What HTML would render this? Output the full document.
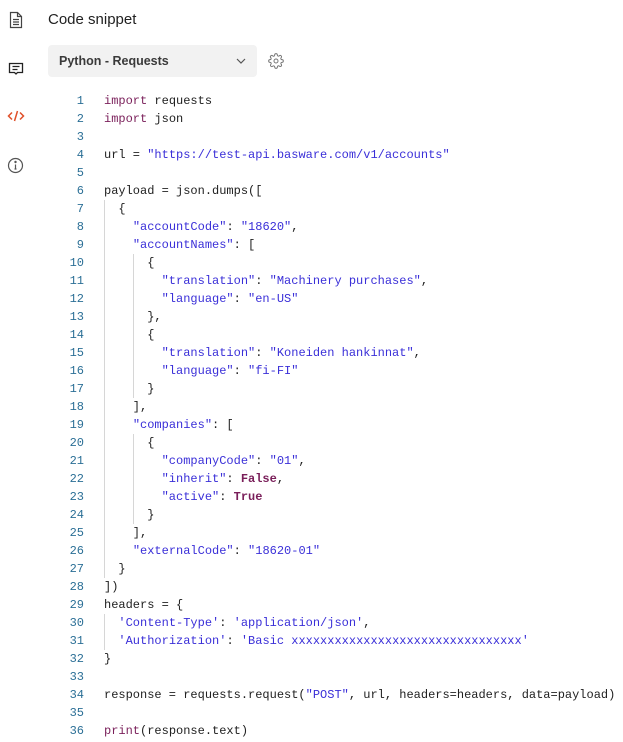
<!DOCTYPE html>
<html><head><meta charset="utf-8">
<style>
html,body{margin:0;padding:0;background:#fff;width:623px;height:742px;overflow:hidden}
body{font-family:"Liberation Sans",sans-serif;color:#212121;position:relative}
.title{position:absolute;left:48px;top:11px;font-size:15px;color:#212121}
.dd{position:absolute;left:48px;top:45px;width:209px;height:32px;background:#f2f2f2;border-radius:4px;box-sizing:border-box}
.dd span{position:absolute;left:11px;top:9px;font-size:12.5px;font-weight:bold;color:#3a3a3a}
.ic{position:absolute}
.code{position:absolute;left:0;top:92px;font-family:"Liberation Mono",monospace;font-size:12px;line-height:18px;white-space:pre}
.ln{position:absolute;left:50px;width:34px;text-align:right;color:#2b6f96}
.tx{position:absolute;left:104px;color:#212121}
.k{color:#7a1f5a}
.s{color:#3a2fd8}
.b{color:#7a1f5a;font-weight:bold}
.g{position:absolute;width:1px;background:#d6d6d6}
</style></head><body>
<svg class="ic" style="left:8px;top:11px" width="16" height="18" viewBox="0 0 16 18" fill="none" stroke="#444" stroke-width="1.2"><path d="M2.5 1.5h7l4 4v11h-11z"/><path d="M9.5 1.5v4h4"/><path d="M5 8.5h6M5 11h6M5 13.5h6"/></svg>
<svg class="ic" style="left:8px;top:61px" width="16" height="16" viewBox="0 0 16 16" fill="none" stroke="#222" stroke-width="1.3"><path d="M1.5 2.5h13v9h-5l-1.5 1.5-1.5-1.5h-5z"/><path d="M4.5 5.5h7M4.5 8.5h5"/></svg>
<svg class="ic" style="left:7px;top:108px" width="18" height="16" viewBox="0 0 18 16" fill="none" stroke="#e0502a" stroke-width="1.5"><path d="M5 4.5L1.5 8 5 11.5M13 4.5L16.5 8 13 11.5M10.5 3L7.5 13"/></svg>
<svg class="ic" style="left:7px;top:157px" width="17" height="17" viewBox="0 0 17 17" fill="none" stroke="#555" stroke-width="1.2"><circle cx="8.5" cy="8.5" r="7"/><path d="M8.5 7.5v4.5M7.5 12h2"/><circle cx="8.5" cy="5" r=".6" fill="#555"/></svg>
<div class="title">Code snippet</div>
<div class="dd"><span>Python - Requests</span>
<svg style="position:absolute;left:188px;top:13px" width="10" height="6" viewBox="0 0 10 6" fill="none" stroke="#555" stroke-width="1.2"><path d="M1 1l4 4 4-4"/></svg></div>
<svg class="ic" style="left:268px;top:53px" width="16" height="16" viewBox="0 0 24 24" fill="none" stroke="#777" stroke-width="1.5"><circle cx="12" cy="12" r="3"/><path d="M19.4 15a1.65 1.65 0 0 0 .33 1.82l.06.06a2 2 0 1 1-2.830 2.83l-.06-.06a1.65 1.65 0 0 0-1.82-.33 1.65 1.65 0 0 0-1 1.51V21a2 2 0 1 1-4 0v-.09A1.65 1.65 0 0 0 9 19.4a1.65 1.65 0 0 0-1.82.33l-.06.06a2 2 0 1 1-2.83-2.83l.06-.06A1.65 1.65 0 0 0 4.68 15a1.65 1.65 0 0 0-1.51-1H3a2 2 0 1 1 0-4h.09A1.65 1.65 0 0 0 4.6 9a1.65 1.65 0 0 0-.33-1.820l-.06-.06a2 2 0 1 1 2.83-2.83l.06.06A1.65 1.65 0 0 0 9 4.68a1.65 1.65 0 0 0 1-1.51V3a2 2 0 1 1 4 0v.09a1.65 1.65 0 0 0 1 1.51 1.65 1.65 0 0 0 1.82-.33l.06-.06a2 2 0 1 1 2.83 2.83l-.06.06A1.65 1.65 0 0 0 19.4 9a1.65 1.65 0 0 0 1.51 1H21a2 2 0 1 1 0 4h-.09a1.65 1.65 0 0 0-1.51 1z"/></svg>

<div class="code">
<div class="g" style="left:104px;top:108px;height:378px"></div>
<div class="g" style="left:133px;top:162px;height:144px"></div>
<div class="g" style="left:133px;top:342px;height:90px"></div>
<div class="g" style="left:104px;top:522px;height:36px"></div>
<div class="ln" style="top:0">1
2
3
4
5
6
7
8
9
10
11
12
13
14
15
16
17
18
19
20
21
22
23
24
25
26
27
28
29
30
31
32
33
34
35
36</div>
<div class="tx" style="top:0"><span class="k">import</span> requests
<span class="k">import</span> json

url = <span class="s">"https://test-api.basware.com/v1/accounts"</span>

payload = json.dumps([
  {
    <span class="s">"accountCode"</span>: <span class="s">"18620"</span>,
    <span class="s">"accountNames"</span>: [
      {
        <span class="s">"translation"</span>: <span class="s">"Machinery purchases"</span>,
        <span class="s">"language"</span>: <span class="s">"en-US"</span>
      },
      {
        <span class="s">"translation"</span>: <span class="s">"Koneiden hankinnat"</span>,
        <span class="s">"language"</span>: <span class="s">"fi-FI"</span>
      }
    ],
    <span class="s">"companies"</span>: [
      {
        <span class="s">"companyCode"</span>: <span class="s">"01"</span>,
        <span class="s">"inherit"</span>: <span class="b">False</span>,
        <span class="s">"active"</span>: <span class="b">True</span>
      }
    ],
    <span class="s">"externalCode"</span>: <span class="s">"18620-01"</span>
  }
])
headers = {
  <span class="s">'Content-Type'</span>: <span class="s">'application/json'</span>,
  <span class="s">'Authorization'</span>: <span class="s">'Basic xxxxxxxxxxxxxxxxxxxxxxxxxxxxxxxx'</span>
}

response = requests.request(<span class="s">"POST"</span>, url, headers=headers, data=payload)

<span class="k">print</span>(response.text)</div>
</div>
</body></html>
